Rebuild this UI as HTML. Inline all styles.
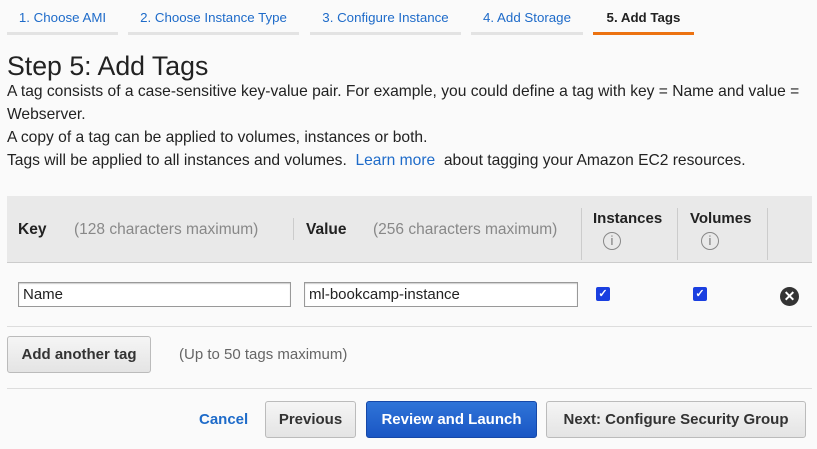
<!DOCTYPE html>
<html><head><style>
*{margin:0;padding:0;box-sizing:border-box}
body{width:817px;height:449px;background:#fafafa;font-family:"Liberation Sans",Arial,sans-serif;color:#222;position:relative;overflow:hidden}
.a{position:absolute;white-space:nowrap}
.tab{position:absolute;top:0;height:35px;border-bottom:3px solid #e3e3e3;color:#1e6bc9;font-size:13.3px;line-height:36px;text-align:center}
.p{font-size:15.6px;line-height:23px;left:7px}
.btn{position:absolute;height:37px;border:1px solid #bbb;border-radius:3px;background:linear-gradient(#f5f5f5,#e4e4e4);font-weight:bold;font-size:15px;line-height:35px;text-align:center;color:#333}
.inp{position:absolute;top:282px;height:25px;border:1px solid #999;background:#fff;font-size:15px;line-height:23px;padding-left:4px;box-shadow:inset 0 1px 1px #ccc}
.cb{position:absolute;top:287px;width:14px;height:14px;background:#1a3fe0;border-radius:2px;color:#fff;font-size:11px;line-height:14px;text-align:center;font-weight:bold}
.info{position:absolute;top:232px;width:18px;height:18px;border:1px solid #888;border-radius:50%;color:#777;font-size:13px;line-height:16px;text-align:center}
</style></head><body>
<div class="tab" style="left:7px;width:111px">1. Choose AMI</div>
<div class="tab" style="left:128px;width:171px">2. Choose Instance Type</div>
<div class="tab" style="left:310px;width:151px">3. Configure Instance</div>
<div class="tab" style="left:471px;width:112px">4. Add Storage</div>
<div class="tab" style="left:593px;width:101px;border-color:#ec7211;color:#222;font-weight:bold">5. Add Tags</div>
<div class="a" style="left:7px;top:50px;font-size:26.7px;line-height:32px">Step 5: Add Tags</div>
<div class="a p" style="top:80px">A tag consists of a case-sensitive key-value pair. For example, you could define a tag with key = Name and value =</div>
<div class="a p" style="top:103px">Webserver.</div>
<div class="a p" style="top:126px">A copy of a tag can be applied to volumes, instances or both.</div>
<div class="a p" style="top:149px">Tags will be applied to all instances and volumes. <span style="color:#1e6bc9">&nbsp;Learn more&nbsp;</span> about tagging your Amazon EC2 resources.</div>
<div class="a" style="left:7px;top:196px;width:805px;height:67px;background:#e9e9e9;border-bottom:1px solid #ccc"></div>
<div class="a" style="left:293px;top:218px;width:1px;height:22px;background:#ccc"></div>
<div class="a" style="left:581px;top:208px;width:1px;height:52px;background:#ccc"></div>
<div class="a" style="left:677px;top:208px;width:1px;height:52px;background:#ccc"></div>
<div class="a" style="left:767px;top:208px;width:1px;height:52px;background:#ccc"></div>
<div class="a" style="left:18px;top:221px;font-size:15.5px;font-weight:bold">Key</div>
<div class="a" style="left:74px;top:221px;font-size:15.5px;color:#888">(128 characters maximum)</div>
<div class="a" style="left:306px;top:221px;font-size:15.5px;font-weight:bold">Value</div>
<div class="a" style="left:373px;top:221px;font-size:15.5px;color:#888">(256 characters maximum)</div>
<div class="a" style="left:593px;top:210px;font-size:15px;font-weight:bold">Instances</div>
<div class="a" style="left:690px;top:210px;font-size:15px;font-weight:bold">Volumes</div>
<div class="info" style="left:603px">i</div>
<div class="info" style="left:701px">i</div>
<div class="inp" style="left:18px;width:273px">Name</div>
<div class="inp" style="left:304px;width:274px">ml-bookcamp-instance</div>
<div class="cb" style="left:596px">✓</div>
<div class="cb" style="left:693px">✓</div>
<div class="a" style="left:780px;top:287px;width:19px;height:19px;border-radius:50%;background:#333;color:#fff;font-size:14px;line-height:19px;text-align:center;font-weight:bold">✕</div>
<div class="a" style="left:7px;top:326px;width:805px;height:1px;background:#ddd"></div>
<div class="btn" style="left:7px;top:336px;width:144px">Add another tag</div>
<div class="a" style="left:179px;top:346px;font-size:15px;color:#666">(Up to 50 tags maximum)</div>
<div class="a" style="left:7px;top:388px;width:805px;height:1px;background:#ddd"></div>
<div class="a" style="left:199px;top:411px;font-size:15px;font-weight:bold;color:#1e6bc9">Cancel</div>
<div class="btn" style="left:265px;top:401px;width:91px">Previous</div>
<div class="btn" style="left:366px;top:401px;width:171px;background:linear-gradient(#2f74d8,#1a56c4);border-color:#1648a8;color:#fff">Review and Launch</div>
<div class="btn" style="left:546px;top:401px;width:260px">Next: Configure Security Group</div>
</body></html>
